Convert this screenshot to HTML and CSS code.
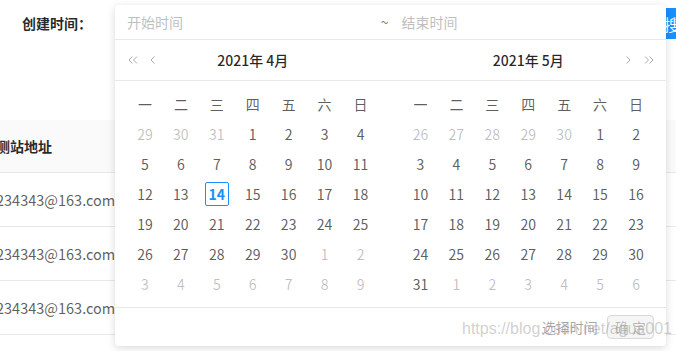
FILE: index.html
```html
<!DOCTYPE html>
<html lang="zh-CN">
<head>
    <meta charset="UTF-8">
    <title>创建时间</title>
    <link rel="stylesheet" href="styles.css">
</head>
<body>

    <!-- Search bar -->
    <div class="search-row">
        <label class="search-label">创建时间：</label>
        <div class="range-input"></div>
        <button class="search-btn">搜索</button>
    </div>

    <!-- Result table -->
    <table class="result-table">
        <thead>
            <tr><th>测站地址</th></tr>
        </thead>
        <tbody>
            <tr><td>234343@163.com</td></tr>
            <tr><td>234343@163.com</td></tr>
            <tr><td>234343@163.com</td></tr>
        </tbody>
    </table>

    <!-- Range picker popup -->
    <div class="picker">
        <div class="panels">
            <div class="panel">
                <div class="input-wrap">
                    <span class="placeholder">开始时间</span>
                    <span class="range-middle">~</span>
                </div>
                <div class="panel-header">
                    <div class="nav nav-left">
                        <svg width="10" height="8" viewBox="0 0 10 8"><path d="M4.5 .5 1 4l3.5 3.5M9 .5 5.5 4 9 7.5" fill="none" stroke="#aaa" stroke-width="1"/></svg>
                        <svg width="5" height="8" viewBox="0 0 5 8"><path d="M4.5 .5 1 4l3.5 3.5" fill="none" stroke="#aaa" stroke-width="1"/></svg>
                    </div>
                    <div class="title">2021年 4月</div>
                    <div class="nav"></div>
                </div>
                <div class="panel-body">
                    <table class="cal" id="calLeft"></table>
                </div>
            </div>
            <div class="panel">
                <div class="input-wrap input-right">
                    <span class="placeholder">结束时间</span>
                </div>
                <div class="panel-header">
                    <div class="nav"></div>
                    <div class="title">2021年 5月</div>
                    <div class="nav nav-right">
                        <svg width="5" height="8" viewBox="0 0 5 8"><path d="M.5 .5 4 4 .5 7.5" fill="none" stroke="#aaa" stroke-width="1"/></svg>
                        <svg width="10" height="8" viewBox="0 0 10 8"><path d="M1 .5 4.5 4 1 7.5M5.5 .5 9 4 5.5 7.5" fill="none" stroke="#aaa" stroke-width="1"/></svg>
                    </div>
                </div>
                <div class="panel-body">
                    <table class="cal" id="calRight"></table>
                </div>
            </div>
        </div>
        <div class="picker-footer">
            <span class="time-btn">选择时间</span>
            <button class="ok-btn" disabled>确 定</button>
        </div>
    </div>

    <div class="watermark">https://blog.csdn.net/agua001</div>

    <script>
        // Build a month grid: startPrev = first day shown from previous month
        function buildMonth(id, prevLen, startPrev, monthLen, today) {
            var table = document.getElementById(id);
            var html = '<thead><tr>';
            ['一', '二', '三', '四', '五', '六', '日'].forEach(function (d) {
                html += '<th>' + d + '</th>';
            });
            html += '</tr></thead><tbody>';

            var cells = [];
            for (var p = startPrev; p <= prevLen; p++) cells.push({ n: p, other: true });
            for (var d = 1; d <= monthLen; d++) cells.push({ n: d, other: false });
            var next = 1;
            while (cells.length < 42) cells.push({ n: next++, other: true });

            for (var r = 0; r < 6; r++) {
                html += '<tr>';
                for (var c = 0; c < 7; c++) {
                    var cell = cells[r * 7 + c];
                    var cls = 'date';
                    if (cell.other) cls += ' other';
                    if (!cell.other && cell.n === today) cls += ' today';
                    html += '<td><span class="' + cls + '">' + cell.n + '</span></td>';
                }
                html += '</tr>';
            }
            table.innerHTML = html + '</tbody>';
        }

        buildMonth('calLeft', 31, 29, 30, 14);
        buildMonth('calRight', 30, 26, 31, 0);
    </script>
</body>
</html>
```

FILE: styles.css
```css
/* Page */
body {
    margin: 0;
    background: #fff;
    font-family: "Noto Sans CJK SC", "Noto Sans", sans-serif;
    font-size: 14px;
    color: rgba(0, 0, 0, 0.65);
    overflow: hidden;
    width: 676px;
    height: 351px;
    position: relative;
}

/* Search bar */
.search-row {
    display: flex;
    align-items: center;
    height: 31px;
    padding: 8px 0 0 22px;
    white-space: nowrap;
}

.search-label {
    width: 93px;
    flex-shrink: 0;
    font-weight: 700;
    color: rgba(0, 0, 0, 0.85);
    line-height: 31px;
}

.range-input {
    width: 545px;
    flex-shrink: 0;
}

.search-btn {
    flex-shrink: 0;
    height: 31px;
    padding: 0 8px 0 4px;
    border: none;
    border-radius: 4px;
    background: #1890ff;
    color: #fff;
    font-family: inherit;
    font-size: 16px;
}

/* Result table */
.result-table {
    margin: 81px 0 0 -20px;
    width: 760px;
    border-collapse: collapse;
}

.result-table th,
.result-table td {
    padding: 16px;
    line-height: 21px;
    text-align: left;
    border-bottom: 1px solid #e8e8e8;
    white-space: nowrap;
}

.result-table td {
    font-size: 14.5px;
}

.result-table th {
    background: #fafafa;
    font-weight: 700;
    color: rgba(0, 0, 0, 0.85);
    padding-bottom: 15px;
}

/* Range picker popup */
.picker {
    position: absolute;
    top: 5px;
    left: 115px;
    width: 551px;
    background: #fff;
    border-radius: 4px;
    box-shadow: 0 2px 8px rgba(0, 0, 0, 0.15);
}

.panels {
    display: grid;
    grid-template-columns: 1fr 1fr;
}

.input-wrap {
    display: flex;
    align-items: center;
    height: 34px;
    padding-left: 12px;
    border-bottom: 1px solid #e8e8e8;
}

.input-right {
    padding-left: 11px;
}

.placeholder {
    color: #bfbfbf;
    line-height: 34px;
}

.range-middle {
    margin-left: auto;
    padding-right: 2px;
    color: rgba(0, 0, 0, 0.55);
}

.panel-header {
    display: grid;
    grid-template-columns: 1fr auto 1fr;
    align-items: center;
    height: 40px;
    border-bottom: 1px solid #e8e8e8;
}

.nav {
    display: flex;
    align-items: center;
}

.nav svg {
    display: block;
}

.nav-left {
    padding-left: 13px;
    gap: 12px;
}

.nav-right {
    justify-content: flex-end;
    padding-right: 12px;
    gap: 13px;
}

.title {
    font-weight: 500;
    color: rgba(0, 0, 0, 0.85);
    line-height: 40px;
}

.panel-body {
    padding: 8px 12px;
}

.cal {
    width: 100%;
    border-collapse: collapse;
    table-layout: fixed;
}

.cal th {
    height: 30px;
    padding: 0;
    font-weight: 400;
    line-height: 18px;
    text-align: center;
}

.cal td {
    height: 30px;
    padding: 0;
    text-align: center;
}

.date {
    display: inline-block;
    width: 24px;
    height: 24px;
    line-height: 22px;
    box-sizing: border-box;
    border: 1px solid transparent;
    border-radius: 2px;
    color: rgba(0, 0, 0, 0.65);
}

.date.other {
    color: rgba(0, 0, 0, 0.25);
}

.date.today {
    border-color: #1890ff;
    color: #1890ff;
    font-weight: 700;
}

/* Footer */
.picker-footer {
    display: flex;
    justify-content: flex-end;
    align-items: center;
    gap: 9px;
    height: 38px;
    padding: 0 12px;
    border-top: 1px solid #e8e8e8;
}

.time-btn {
    color: rgba(0, 0, 0, 0.35);
}

.ok-btn {
    height: 24px;
    padding: 0 7px;
    border: 1px solid #d9d9d9;
    border-radius: 4px;
    background: #f5f5f5;
    color: rgba(0, 0, 0, 0.25);
    font-family: inherit;
    font-size: 14px;
    line-height: 22px;
}

/* Screenshot watermark */
.watermark {
    position: absolute;
    left: 462px;
    top: 318px;
    font-family: "Liberation Sans", Arial, sans-serif;
    font-size: 16px;
    line-height: 22px;
    color: rgba(150, 150, 150, 0.45);
    white-space: nowrap;
}
```
